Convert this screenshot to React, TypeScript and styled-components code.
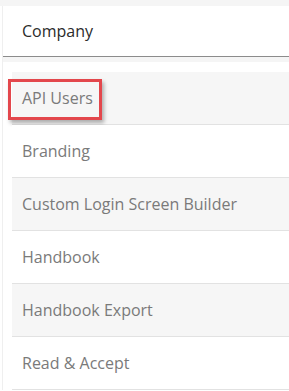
import React from "react";
import styled, { createGlobalStyle } from "styled-components";

const items = [
  "API Users",
  "Branding",
  "Custom Login Screen Builder",
  "Handbook",
  "Handbook Export",
  "Read & Accept",
];

const CompanyMenu = () => {
  return (
    <>
      <GlobalStyle />
      <Page>
        <TopStrip />
        <Panel>
          <Header>Company</Header>
          <Gap />
          <List>
            {items.map((label, i) => (
              <Row key={label} $shaded={i % 2 === 0}>
                {label}
                {i === 0 && <Highlight />}
              </Row>
            ))}
          </List>
        </Panel>
      </Page>
    </>
  );
};

const GlobalStyle = createGlobalStyle`
  html, body {
    margin: 0;
    padding: 0;
    background: #ffffff;
  }
  body {
    font-family: "Open Sans", "Liberation Sans", sans-serif;
    overflow: hidden;
  }
`;

const Page = styled.div`
  width: 289px;
  height: 391px;
  background: #ffffff;
  overflow: hidden;
`;

const TopStrip = styled.div`
  height: 6px;
  background: #f5f5f5;
`;

const Panel = styled.div`
  margin-left: 2px;
  border-left: 1px solid #efefef;
`;

const Header = styled.div`
  height: 50px;
  display: flex;
  align-items: center;
  padding-left: 19px;
  font-size: 16px;
  color: #2b2b2b;
  border-bottom: 1px solid #8c8c8c;
`;

const Gap = styled.div`
  height: 15px;
  background: linear-gradient(#f5f5f5 0, #f5f5f5 5px, #ffffff 5px);
`;

const List = styled.div`
  padding-left: 9px;
  display: flex;
  flex-direction: column;
`;

const Row = styled.div<{ $shaded: boolean }>`
  position: relative;
  height: 52px;
  display: flex;
  align-items: center;
  padding-left: 10px;
  font-size: 16px;
  color: #7a7a7a;
  background: ${(p) => (p.$shaded ? "#f6f6f6" : "#ffffff")};
  border-bottom: 1px solid #e2e2e2;
`;

const Highlight = styled.div`
  position: absolute;
  left: -4px;
  top: 7px;
  width: 94px;
  height: 41px;
  box-sizing: border-box;
  border: 3px solid #e3474c;
  box-shadow: 2px 3px 4px rgba(0, 0, 0, 0.3);
`;

export default CompanyMenu;
